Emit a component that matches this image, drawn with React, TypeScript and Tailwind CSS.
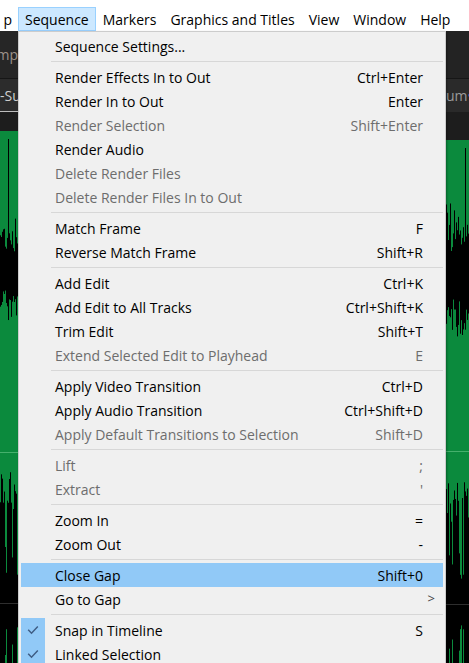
import React from "react";

type Item =
  | { sep: true }
  | { label: string; key?: string; off?: boolean; hot?: boolean; check?: boolean; sub?: boolean };

const items: Item[] = [
  { label: "Sequence Settings..." },
  { sep: true },
  { label: "Render Effects In to Out", key: "Ctrl+Enter" },
  { label: "Render In to Out", key: "Enter" },
  { label: "Render Selection", key: "Shift+Enter", off: true },
  { label: "Render Audio" },
  { label: "Delete Render Files", off: true },
  { label: "Delete Render Files In to Out", off: true },
  { sep: true },
  { label: "Match Frame", key: "F" },
  { label: "Reverse Match Frame", key: "Shift+R" },
  { sep: true },
  { label: "Add Edit", key: "Ctrl+K" },
  { label: "Add Edit to All Tracks", key: "Ctrl+Shift+K" },
  { label: "Trim Edit", key: "Shift+T" },
  { label: "Extend Selected Edit to Playhead", key: "E", off: true },
  { sep: true },
  { label: "Apply Video Transition", key: "Ctrl+D" },
  { label: "Apply Audio Transition", key: "Ctrl+Shift+D" },
  { label: "Apply Default Transitions to Selection", key: "Shift+D", off: true },
  { sep: true },
  { label: "Lift", key: ";", off: true },
  { label: "Extract", key: "'", off: true },
  { sep: true },
  { label: "Zoom In", key: "=" },
  { label: "Zoom Out", key: "-" },
  { sep: true },
  { label: "Close Gap", key: "Shift+0", hot: true },
  { label: "Go to Gap", sub: true },
  { sep: true },
  { label: "Snap in Timeline", key: "S", check: true },
  { label: "Linked Selection", check: true },
];

const menus = ["Sequence", "Markers", "Graphics and Titles", "View", "Window", "Help"];

// simple seeded noise so the waveform stays the same every render
function noise(seed: number) {
  let s = seed;
  return () => {
    s = (s * 9301 + 49297) % 233280;
    return s / 233280;
  };
}

interface WaveProps {
  width: number;
  height: number;
  seed: number;
  c1: number; // centre of upper track (local y)
  a1: number; // typical amplitude upper track
  divider: number;
  c2: number;
  a2: number;
  spikeAt?: number;
}

function Waveform({ width, height, seed, c1, a1, divider, c2, a2, spikeAt }: WaveProps) {
  const rnd = noise(seed);
  const cols: React.ReactNode[] = [];
  for (let x = 0; x < width; x++) {
    let up = a1 * (0.4 + rnd() * 0.8);
    if (x === spikeAt) up = c1 - 8;
    const down = a1 * (0.4 + rnd() * 0.7);
    cols.push(
      <line key={"a" + x} x1={x + 0.5} x2={x + 0.5} y1={c1 - up} y2={c1 + down} stroke="#000" />
    );
    // loud lower track leaves only thin green gaps
    const gap = rnd() > 0.72;
    const amp = gap ? a2 * (0.2 + rnd() * 0.3) : a2 * (0.8 + rnd() * 0.4);
    cols.push(
      <line key={"b" + x} x1={x + 0.5} x2={x + 0.5} y1={c2 - amp} y2={c2 + amp} stroke="#000" />
    );
  }
  return (
    <svg width={width} height={height} className="block">
      <rect width={width} height={height} fill="#0b8a3d" />
      {cols}
      <line x1={0} x2={width} y1={divider + 0.5} y2={divider + 0.5} stroke="#45b06c" />
      <line x1={0} x2={width} y1={c2 + 2.5} y2={c2 + 2.5} stroke="#2e2e2e" />
    </svg>
  );
}

function Check() {
  return (
    <svg width="12" height="10" viewBox="0 0 12 10">
      <path d="M1.2 4.8 L4.5 8.2 L10.8 1.6" fill="none" stroke="#3f5d84" strokeWidth="1.5" />
    </svg>
  );
}

export default function App() {
  return (
    <div className="relative w-[469px] h-[663px] overflow-hidden bg-[#1e1e1e] font-['Open_Sans','Noto_Sans',sans-serif] text-[14px] text-black">
      {/* menu bar */}
      <div className="flex h-[31px] bg-white items-end">
        <div className="w-[18px] h-[24px] flex items-center justify-end pr-[6px] overflow-hidden">p</div>
        {menus.map((m, i) => (
          <div
            key={m}
            className={`h-[24px] flex items-center whitespace-nowrap ${
              i === 0 ? "bg-[#cce8ff] border border-[#99d1ff] px-[6px]" : "px-[7px]"
            }`}
          >
            {m}
          </div>
        ))}
      </div>

      {/* panels behind the menu */}
      <div className="flex justify-between h-[632px]">
        <div className="w-[18px] flex flex-col overflow-hidden">
          <div className="h-[47px] bg-[#262626] text-[#9b918a] flex items-center justify-end whitespace-nowrap">mp</div>
          <div className="h-px bg-[#161616]" />
          <div className="h-[33px] bg-[#2c2c2c] text-[#cfcfcf] flex items-center whitespace-nowrap border-b border-[#bdbdbd]">-Su</div>
          <div className="h-[19px] bg-[#1d1d1d]" />
          <Waveform width={18} height={532} seed={7} c1={140} a1={45} divider={321} c2={470} a2={110} spikeAt={8} />
        </div>
        <div className="w-[23px] flex flex-col overflow-hidden">
          <div className="h-[47px] bg-[#232323]" />
          <div className="h-px bg-[#161616]" />
          <div className="h-[33px] bg-[#2a2a2a] text-[#9a9a9a] flex items-center whitespace-nowrap">
            um<span className="text-[#4a8fd8]">•</span>
          </div>
          <div className="h-[28px] bg-[#1d1d1d]" />
          <Waveform width={23} height={523} seed={19} c1={135} a1={60} divider={311} c2={462} a2={100} spikeAt={19} />
        </div>
      </div>

      {/* dropdown */}
      <div className="absolute left-[18px] top-[31px] w-[428px] bg-[#f0f0f0] border border-[#cccccc] p-[2px] shadow-[1px_1px_2px_rgba(0,0,0,0.3)]">
        {items.map((it, i) =>
          "sep" in it ? (
            <div key={i} className="h-[7px] flex items-center pl-[30px]">
              <div className="h-px w-full bg-[#d7d7d7]" />
            </div>
          ) : (
            <div
              key={i}
              className={`relative h-[24px] flex items-center justify-between pl-[34px] pr-[20px] whitespace-nowrap ${
                it.hot ? "bg-[#91c9f7]" : ""
              } ${it.off ? "text-[#6d6d6d]" : "text-black"}`}
            >
              {it.check && (
                <div className="absolute left-0 top-0 w-[24px] h-[24px] bg-[#91c9f7] flex items-center justify-center">
                  <Check />
                </div>
              )}
              <span>{it.label}</span>
              {it.key && <span>{it.key}</span>}
              {it.sub && <span className="text-[#444] text-[13px] mr-[-12px]">&gt;</span>}
            </div>
          )
        )}
      </div>
    </div>
  );
}
